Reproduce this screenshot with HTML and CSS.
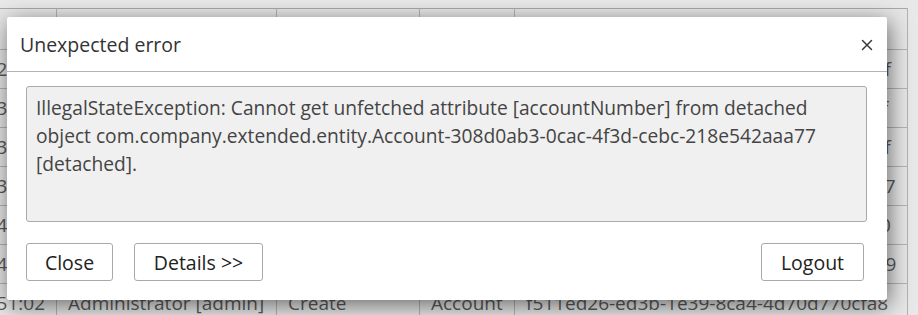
FILE: index.html
```html
<!DOCTYPE html>
<html>
<head>
<meta charset="utf-8">
<link rel="stylesheet" href="styles.css">
</head>
<body>
<div class="page">
  <table class="grid">
    <colgroup>
      <col class="c-time"><col class="c-user"><col class="c-type"><col class="c-entity"><col class="c-id">
    </colgroup>
    <thead>
      <tr class="head-row"><th>Time</th><th>User</th><th>Change type</th><th>Entity</th><th>Entity ID</th></tr>
    </thead>
    <tbody>
      <tr><td class="t">10:21:14</td><td>Administrator [admin]</td><td>Modify</td><td>Account</td><td>9a31c7d2-ed3b-1e39-8ca4-4d70d770c1ef</td></tr>
      <tr><td class="t">10:31:40</td><td>Administrator [admin]</td><td>Modify</td><td>Account</td><td>b72e1f06-ed3b-1e39-8ca4-4d70d770c5af</td></tr>
      <tr><td class="t">10:33:09</td><td>Administrator [admin]</td><td>Create</td><td>Account</td><td>c0d4a8e1-ed3b-1e39-8ca4-4d70d770c3af</td></tr>
      <tr><td class="t">10:38:52</td><td>Administrator [admin]</td><td>Create</td><td>Account</td><td>5e8b2c91-ed3b-1e39-8ca4-4d70d770c417</td></tr>
      <tr><td class="t">10:44:27</td><td>Administrator [admin]</td><td>Modify</td><td>Account</td><td>71af3d0c-ed3b-1e39-8ca4-4d70d770c4a0</td></tr>
      <tr><td class="t">10:48:15</td><td>Administrator [admin]</td><td>Create</td><td>Account</td><td>e4c9b057-ed3b-1e39-8ca4-4d70d770c2b9</td></tr>
      <tr><td class="t">10:51:02</td><td>Administrator [admin]</td><td>Create</td><td>Account</td><td>f511ed26-ed3b-1e39-8ca4-4d70d770cfa8</td></tr>
    </tbody>
  </table>

  <div class="dialog">
    <div class="dialog-header">
      <span class="dialog-title">Unexpected error</span>
      <span class="dialog-close" aria-label="close">
        <svg width="12" height="12" viewBox="0 0 12 12"><path d="M1.5 1.5 L10.5 10.5 M10.5 1.5 L1.5 10.5" stroke="#3a3a3a" stroke-width="1.5" fill="none" stroke-linecap="round"/></svg>
      </span>
    </div>
    <div class="dialog-body">
      <div class="message">IllegalStateException: Cannot get unfetched attribute [accountNumber] from detached object com.company.extended.entity.Account-308d0ab3-0cac-4f3d-cebc-218e542aaa77 [detached].</div>
      <div class="buttons">
        <button class="btn btn-close">Close</button>
        <button class="btn btn-details">Details &gt;&gt;</button>
        <span class="spacer"></span>
        <button class="btn btn-logout">Logout</button>
      </div>
    </div>
  </div>
</div>
</body>
</html>
```
FILE: styles.css
```css
html, body {
  margin: 0;
  padding: 0;
  background: #e8e8e8;
  font-family: "Open Sans", "Noto Sans", sans-serif;
  overflow: hidden;
}

.page {
  position: relative;
  width: 918px;
  height: 315px;
  overflow: hidden;
  padding-top: 8px;
  box-sizing: border-box;
}

.grid {
  border-collapse: collapse;
  table-layout: fixed;
  margin-left: -100px;
  width: 1007px;
  background: #e6e6e6;
  color: #5a5a5a;
  font-size: 19px;
}

.c-time { width: 156px; }
.c-user { width: 220px; }
.c-type { width: 143px; }
.c-entity { width: 95px; }
.c-id { width: 393px; }

.grid th, .grid td {
  border: 1px solid #b2b2b2;
  padding: 0 11px;
  height: 38px;
  white-space: nowrap;
  overflow: hidden;
  text-align: left;
  font-weight: normal;
}

.grid th { border-top-color: #a8a8a8; }

.head-row th { height: 40px; color: #e6e6e6; }

.grid td.t { text-align: right; padding-right: 11px; }

.dialog {
  position: absolute;
  left: 7px;
  top: 17px;
  width: 880px;
  height: 283px;
  background: #ffffff;
  border-radius: 2px;
  box-shadow: 2px 5px 22px rgba(0, 0, 0, 0.55);
  display: flex;
  flex-direction: column;
  box-sizing: border-box;
}

.dialog-header {
  height: 55px;
  box-sizing: border-box;
  border-bottom: 1px solid #b4b4b4;
  display: flex;
  align-items: center;
  padding: 0 13px 0 13px;
}

.dialog-title {
  flex: 1;
  font-size: 19.5px;
  color: #333333;
}

.dialog-close {
  width: 12px;
  height: 12px;
  display: flex;
  margin-right: 1px;
  margin-top: 2px;
}

.dialog-body {
  flex: 1;
  display: flex;
  flex-direction: column;
  padding: 14px 20px 19px 19px;
}

.message {
  height: 136px;
  box-sizing: border-box;
  background: #f0f0f0;
  border: 1px solid #a9a9a9;
  border-radius: 3px;
  padding: 7px 9px;
  font-size: 19.2px;
  line-height: 28px;
  color: #444444;
}

.buttons {
  margin-top: 21px;
  display: flex;
  align-items: center;
  gap: 21px;
}

.spacer { flex: 1; }

.btn {
  height: 38px;
  box-sizing: border-box;
  background: #ffffff;
  border: 1px solid #a9a9a9;
  border-radius: 3px;
  font-family: "Open Sans", "Noto Sans", sans-serif;
  font-size: 19.5px;
  color: #222222;
  padding: 0;
  text-align: center;
}

.btn-close { width: 87px; }
.btn-details { width: 129px; }
.btn-logout { width: 103px; margin-right: 3px; }
```
